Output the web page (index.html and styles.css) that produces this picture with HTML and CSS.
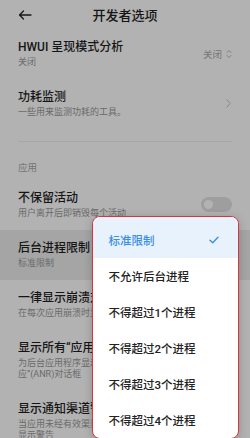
FILE: index.html
```html
<!DOCTYPE html>
<html lang="zh">
<head>
    <meta charset="UTF-8">
    <title>开发者选项</title>
    <link rel="stylesheet" href="styles.css">
</head>
<body>

    <div class="screen">
        <header class="topbar">
            <svg class="back" width="14" height="10" viewBox="0 0 14 10">
                <path d="M13 5H1.5M5.5 1L1.5 5l4 4" fill="none" stroke="#222" stroke-width="1.3" stroke-linecap="round" stroke-linejoin="round"/>
            </svg>
            <h1>开发者选项</h1>
            <span></span>
        </header>

        <div class="row">
            <div class="text">
                <div class="title">HWUI 呈现模式分析</div>
                <div class="sub">关闭</div>
            </div>
            <div class="value">
                关闭
                <svg width="6" height="10" viewBox="0 0 6 10">
                    <path d="M1 3.5L3 1.5l2 2M1 6.5l2 2 2-2" fill="none" stroke="#aaa" stroke-width="0.9" stroke-linecap="round" stroke-linejoin="round"/>
                </svg>
            </div>
        </div>

        <div class="row">
            <div class="text">
                <div class="title">功耗监测</div>
                <div class="sub">一些用来监测功耗的工具。</div>
            </div>
            <svg class="chevron" width="5" height="9" viewBox="0 0 5 9">
                <path d="M0.8 0.8L4.2 4.5 0.8 8.2" fill="none" stroke="#bbb" stroke-width="0.9" stroke-linecap="round" stroke-linejoin="round"/>
            </svg>
        </div>

        <div class="divider"></div>
        <div class="category">应用</div>

        <div class="row">
            <div class="text">
                <div class="title">不保留活动</div>
                <div class="sub">用户离开后即销毁每个活动</div>
            </div>
            <div class="toggle"><span class="knob"></span></div>
        </div>

        <div class="row pressed">
            <div class="text">
                <div class="title">后台进程限制</div>
                <div class="sub">标准限制</div>
            </div>
        </div>

        <div class="row">
            <div class="text">
                <div class="title">一律显示崩溃对话框</div>
                <div class="sub">在每次应用崩溃时显示对话框</div>
            </div>
        </div>

        <div class="row">
            <div class="text">
                <div class="title">显示所有“应用程序无响应”</div>
                <div class="sub">为后台应用程序显示“应用程序无响<br>应”(ANR)对话框</div>
            </div>
        </div>

        <div class="row">
            <div class="text">
                <div class="title">显示通知渠道警告</div>
                <div class="sub">当应用未经有效渠道发布通知时，在屏幕上<br>显示警告</div>
            </div>
        </div>
    </div>

    <div class="dim"></div>

    <div class="menu">
        <div class="menu-item selected">
            标准限制
            <svg width="10" height="8" viewBox="0 0 10 8">
                <path d="M1 4.2l2.7 2.6L9 1.2" fill="none" stroke="#3a8ee6" stroke-width="1.4" stroke-linecap="round" stroke-linejoin="round"/>
            </svg>
        </div>
        <div class="menu-item">不允许后台进程</div>
        <div class="menu-item">不得超过1个进程</div>
        <div class="menu-item">不得超过2个进程</div>
        <div class="menu-item">不得超过3个进程</div>
        <div class="menu-item">不得超过4个进程</div>
    </div>

</body>
</html>
```

FILE: styles.css
```css
html, body {
    margin: 0;
    width: 250px;
    height: 438px;
    overflow: hidden;
}
body {
    position: relative;
    background-color: #fff;
    font-family: Roboto, "Noto Sans CJK SC", sans-serif;
}
.topbar {
    height: 29px;
    display: grid;
    grid-template-columns: 1fr auto 1fr;
    align-items: center;
}
.back {
    margin-left: 18px;
}
.topbar h1 {
    margin: 0;
    font-size: 13px;
    font-weight: 500;
    color: #222;
}
.row {
    display: flex;
    align-items: center;
    padding: 10px 18px 11px;
}
.row .text {
    flex: 1;
    min-width: 0;
}
.title {
    font-size: 12px;
    line-height: 16px;
    font-weight: 500;
    color: #1f1f1f;
    margin-bottom: 2px;
    white-space: nowrap;
}
.sub {
    font-size: 9px;
    line-height: 11px;
    color: #999;
    white-space: nowrap;
}
.pressed {
    background-color: #ececec;
}
.value {
    display: flex;
    align-items: center;
    gap: 4px;
    font-size: 9.5px;
    color: #aaa;
}
.chevron {
    margin-right: 1px;
}
.divider {
    height: 1px;
    margin: 12px 18px 0;
    background-color: #f0f0f0;
}
.category {
    padding: 20px 18px 6px;
    font-size: 9.5px;
    line-height: 12px;
    color: #aaa;
}
.toggle {
    width: 31px;
    height: 15px;
    border-radius: 8px;
    background-color: #e3e3e3;
    display: flex;
    align-items: center;
    padding-left: 3px;
    box-sizing: border-box;
}
.knob {
    width: 9px;
    height: 9px;
    border-radius: 50%;
    background-color: #fff;
}
.dim {
    position: absolute;
    inset: 0;
    background-color: rgba(0, 0, 0, 0.3);
}
.menu {
    position: absolute;
    left: 92px;
    top: 216px;
    width: 147px;
    box-sizing: border-box;
    background-color: #fff;
    border: 1.5px solid #d9353d;
    border-radius: 8px;
    overflow: hidden;
    box-shadow: 0 2px 10px rgba(0, 0, 0, 0.2);
}
.menu-item {
    height: 36px;
    display: flex;
    align-items: center;
    justify-content: space-between;
    padding: 0 19px 0 15.5px;
    font-size: 11.5px;
    font-weight: 500;
    color: #222;
}
.menu-item.selected {
    height: 41px;
    padding-top: 5px;
    box-sizing: border-box;
    background-color: #e8f2fd;
    color: #3a8ee6;
}
```
